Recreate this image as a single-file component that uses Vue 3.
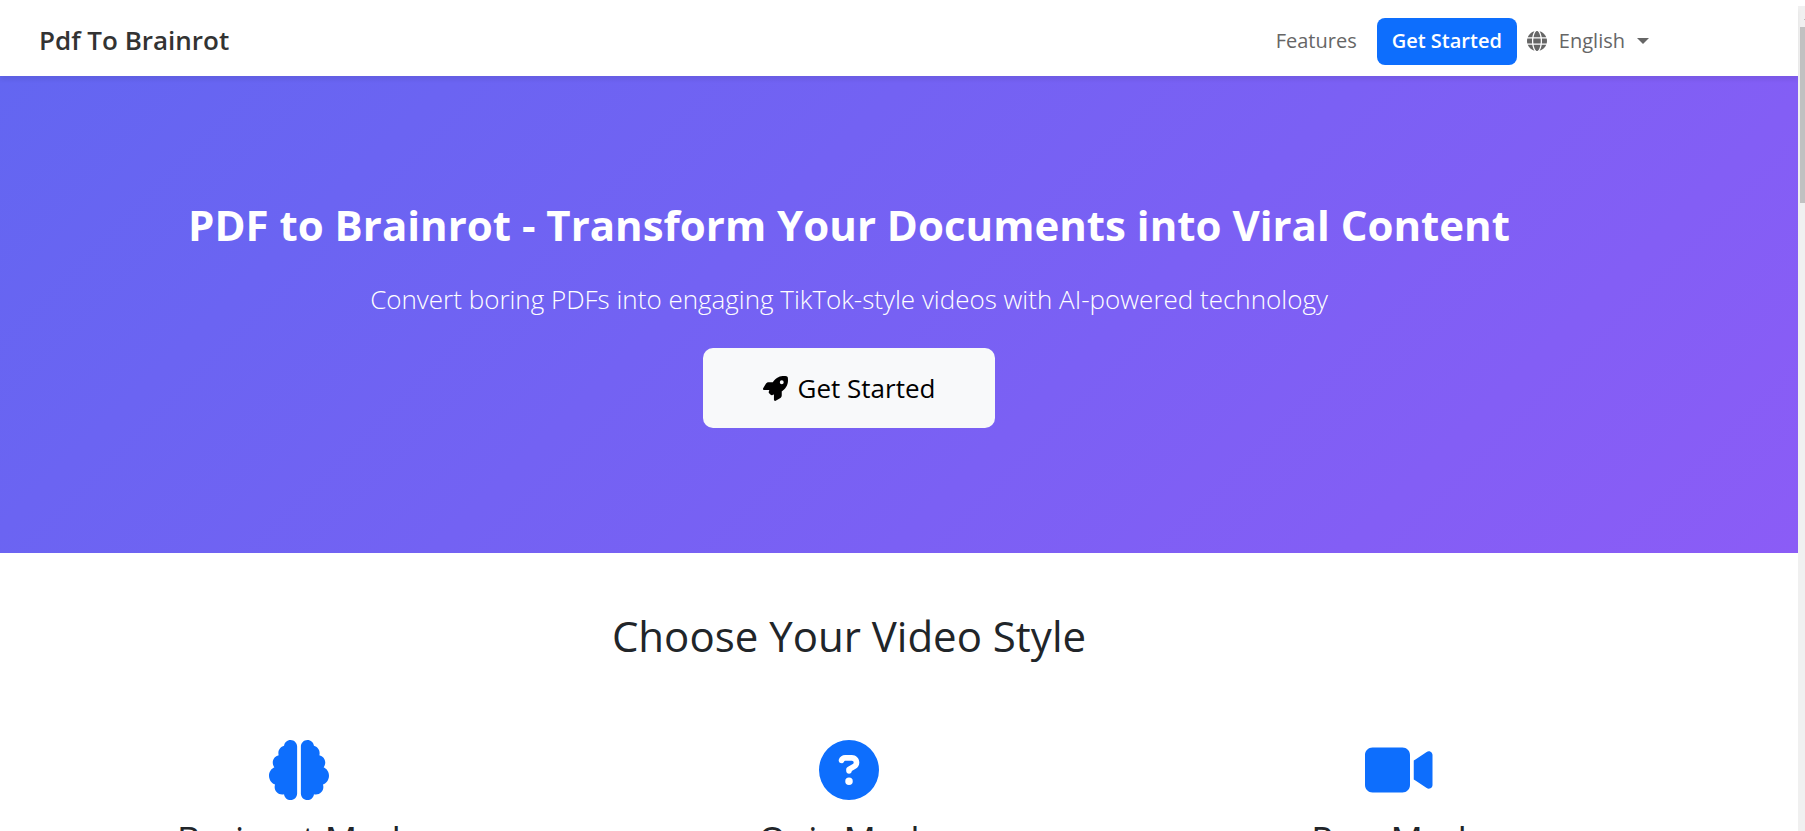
<template>
	<div class="page">
		<div class="page__content">
			<header class="navbar">
				<nav class="navbar__inner container">
					<a class="navbar__brand" href="#">Pdf To Brainrot</a>
					<div class="navbar__menu">
						<a class="navbar__link" href="#features">Features</a>
						<a class="navbar__start" href="#start">Get Started</a>
						<button class="navbar__lang" type="button" aria-haspopup="true">
							<svg width="20" height="20" viewBox="0 0 512 512" fill="currentColor">
								<path
									d="M352 256c0 22.2-1.2 43.6-3.3 64H163.3c-2.2-20.4-3.3-41.8-3.3-64s1.2-43.6 3.3-64H348.7c2.2 20.4 3.3 41.8 3.3 64zm28.8-64H503.9c5.3 20.5 8.1 41.9 8.1 64s-2.8 43.5-8.1 64H380.8c2.1-20.6 3.2-42 3.2-64s-1.1-43.4-3.2-64zm112.6-32H376.7c-10-63.9-29.8-117.4-55.3-151.6c78.3 20.7 142 77.5 171.9 151.6zm-149.1 0H167.7c6.1-36.4 15.5-68.6 27-94.7c10.5-23.6 22.2-40.7 33.5-51.5C239.4 3.2 248.7 0 256 0s16.6 3.2 27.8 13.8c11.3 10.8 23 27.9 33.5 51.5c11.6 26 20.9 58.2 27 94.7zm-209 0H18.6C48.6 85.9 112.2 29.1 190.6 8.4C165.1 42.6 145.3 96.1 135.3 160zM8.1 192H131.2c-2.1 20.6-3.2 42-3.2 64s1.1 43.4 3.2 64H8.1C2.8 299.5 0 278.1 0 256s2.8-43.5 8.1-64zM194.7 446.6c-11.6-26-20.9-58.2-27-94.6H344.3c-6.1 36.4-15.5 68.6-27 94.6c-10.5 23.6-22.2 40.7-33.5 51.5C272.6 508.8 263.3 512 256 512s-16.6-3.2-27.8-13.8c-11.3-10.8-23-27.9-33.5-51.5zM135.3 352c10 63.9 29.8 117.4 55.3 151.6C112.2 482.9 48.6 426.1 18.6 352H135.3zm358.1 0c-30 74.1-93.6 130.9-171.9 151.6c25.5-34.2 45.2-87.7 55.3-151.6H493.4z" />
							</svg>
							<span>English</span>
							<i class="navbar__caret"></i>
						</button>
					</div>
				</nav>
			</header>

			<section class="hero">
				<div class="hero__inner container">
					<h1 class="hero__title">PDF to Brainrot - Transform Your Documents into Viral Content</h1>
					<p class="hero__lead">
						Convert boring PDFs into engaging TikTok-style videos with AI-powered technology
					</p>
					<button class="hero__button" type="button">
						<svg width="25" height="25" viewBox="0 0 512 512" fill="currentColor">
							<path
								d="M156.6 384.9L125.7 354c-8.5-8.5-11.5-20.8-7.7-32.2c3-8.9 7-20.5 11.8-33.8L24 288c-8.6 0-16.6-4.6-20.9-12.1s-4.2-16.7 .2-24.1l52.5-88.5c13-21.9 36.5-35.3 61.9-35.3l82.3 0c2.4-4 4.8-7.7 7.2-11.3C289.1-4.1 411.1-8.1 483.9 5.3c11.6 2.1 20.6 11.2 22.8 22.8c13.4 72.9 9.3 194.8-111.4 276.7c-3.5 2.4-7.3 4.8-11.3 7.2v82.3c0 25.4-13.4 49-35.3 61.9l-88.5 52.5c-7.4 4.4-16.6 4.5-24.1 .2s-12.1-12.2-12.1-20.9V380.8c-14.1 4.9-26.4 8.9-35.7 11.9c-11.2 3.6-23.4 .5-31.8-7.8zM384 168a40 40 0 1 0 0-80 40 40 0 1 0 0 80z" />
						</svg>
						Get Started
					</button>
				</div>
			</section>

			<section id="features" class="styles container">
				<h2 class="styles__title">Choose Your Video Style</h2>
				<div class="styles__grid">
					<article v-for="mode in modes" :key="mode.title" class="styles__item">
						<svg class="styles__icon" :viewBox="mode.viewBox" fill="currentColor">
							<path :d="mode.path" />
						</svg>
						<h3 class="styles__name">{{ mode.title }}</h3>
					</article>
				</div>
			</section>
		</div>

		<div class="scrollbar" aria-hidden="true">
			<div class="scrollbar__arrow"></div>
			<div class="scrollbar__thumb"></div>
		</div>
	</div>
</template>

<script setup>
const modes = [
	{
		title: "Brainrot Mode",
		viewBox: "0 0 512 512",
		path: "M184 0c30.9 0 56 25.1 56 56V456c0 30.9-25.1 56-56 56c-28.9 0-52.7-21.9-55.7-50.1c-5.2 1.4-10.7 2.1-16.3 2.1c-35.3 0-64-28.7-64-64c0-7.4 1.3-14.6 3.6-21.2C21.4 367.4 0 338.2 0 304c0-31.9 18.7-59.5 45.8-72.3C37.1 220.8 32 207 32 192c0-30.7 21.6-56.3 50.4-62.6C80.8 123.9 80 118 80 112c0-29.9 20.6-55.1 48.3-62.1C131.3 21.9 155.1 0 184 0zM328 0c28.9 0 52.6 21.9 55.7 49.9c27.8 7 48.3 32.1 48.3 62.1c0 6-.8 11.9-2.4 17.4c28.8 6.2 50.4 31.9 50.4 62.6c0 15-5.1 28.8-13.8 39.7C493.3 244.5 512 272.1 512 304c0 34.2-21.4 63.4-51.6 74.8c2.3 6.6 3.6 13.8 3.6 21.2c0 35.3-28.7 64-64 64c-5.6 0-11.1-.7-16.3-2.1c-3 28.2-26.8 50.1-55.7 50.1c-30.9 0-56-25.1-56-56V56c0-30.9 25.1-56 56-56z",
	},
	{
		title: "Quiz Mode",
		viewBox: "0 0 512 512",
		path: "M256 512A256 256 0 1 0 256 0a256 256 0 1 0 0 512zM169.8 165.3c7.9-22.3 29.1-37.3 52.8-37.3h58.3c34.9 0 63.1 28.3 63.1 63.1c0 22.6-12.1 43.5-31.7 54.8L280 264.4c-.2 13-10.9 23.6-24 23.6c-13.3 0-24-10.7-24-24V250.5c0-8.6 4.6-16.5 12.1-20.8l44.3-25.4c4.7-2.7 7.6-7.7 7.6-13.1c0-8.4-6.8-15.1-15.1-15.1H222.6c-3.4 0-6.4 2.1-7.5 5.3l-.4 1.2c-4.4 12.5-18.2 19-30.6 14.6s-19-18.2-14.6-30.6l.4-1.2zM224 352a32 32 0 1 1 64 0 32 32 0 1 1 -64 0z",
	},
	{
		title: "Raw Mode",
		viewBox: "0 0 576 512",
		path: "M0 128C0 92.7 28.7 64 64 64H320c35.3 0 64 28.7 64 64V384c0 35.3-28.7 64-64 64H64c-35.3 0-64-28.7-64-64V128zM559.1 99.8c10.4 5.6 16.9 16.4 16.9 28.2V384c0 11.8-6.5 22.6-16.9 28.2s-23 5-32.9-1.6l-96-64L416 337.1V320 192 174.9l14.2-9.5 96-64c9.8-6.5 22.4-7.2 32.9-1.6z",
	},
];
</script>

<style>
body {
	margin: 0;
	background: #fff;
}
</style>

<style scoped>
.page {
	display: flex;
	height: 100vh;
	overflow: hidden;
	color: #212529;
	font-family: "Open Sans", "Noto Sans", sans-serif;
	font-size: 20px;
	line-height: 30px;
}

.page__content {
	flex: 1;
	min-width: 0;
	padding-top: 6px;
}

.container {
	margin-left: 24px;
	margin-right: 124px;
}

.navbar {
	position: relative;
	background: #fff;
	box-shadow: 0 4px 4px rgba(0, 0, 0, 0.06);
}

.navbar__inner {
	display: flex;
	align-items: center;
	justify-content: space-between;
	height: 70px;
	padding: 0 15px;
}

.navbar a {
	text-decoration: none;
}

.navbar__brand {
	padding-bottom: 2px;
	color: #333;
	font-size: 26px;
	font-weight: 600;
}

.navbar__menu {
	display: flex;
	align-items: center;
	gap: 10px;
}

.navbar__link,
.navbar__lang {
	color: #666;
	padding: 0 10px;
}

.navbar__start {
	padding: 8px 15px 9px;
	border-radius: 8px;
	background: #0d6efd;
	color: #fff;
	font-weight: 600;
}

.navbar__lang {
	display: flex;
	align-items: center;
	gap: 12px;
	padding-left: 0;
	border: 0;
	background: none;
	font: inherit;
}

.navbar__caret {
	border-top: 6px solid;
	border-left: 6px solid transparent;
	border-right: 6px solid transparent;
}

.hero {
	padding: 119px 0 125px;
	background: linear-gradient(135deg, #6366f1 0%, #8b5cf6 100%);
	color: #fff;
}

.hero__inner {
	display: flex;
	flex-direction: column;
	align-items: center;
	text-align: center;
}

.hero__title {
	margin: 0 0 24px;
	font-size: 42px;
	font-weight: 700;
	line-height: 60px;
}

.hero__lead {
	margin: 0 0 29px;
	font-size: 26px;
	font-weight: 300;
	line-height: 40px;
}

.hero__button {
	display: flex;
	align-items: center;
	gap: 10px;
	padding: 20px 60px;
	border: 0;
	border-radius: 10px;
	background: #f8f9fa;
	color: #000;
	font-family: inherit;
	font-size: 26px;
	line-height: 40px;
}

.styles {
	padding-top: 59px;
	text-align: center;
}

.styles__title {
	margin: 0 0 80px;
	font-size: 42px;
	font-weight: 400;
	line-height: 48px;
}

.styles__grid {
	display: grid;
	grid-template-columns: repeat(3, 1fr);
}

.styles__item {
	display: flex;
	flex-direction: column;
	align-items: center;
}

.styles__icon {
	height: 60px;
	color: #0d6efd;
}

.styles__name {
	margin: 20px 0 0;
	font-size: 36px;
	font-weight: 500;
	line-height: 40px;
}

.scrollbar {
	flex: none;
	box-sizing: border-box;
	width: 7px;
	margin-top: 6px;
	padding: 10px 0 0 2px;
	overflow: hidden;
	background: #f0f0f0;
}

.scrollbar__arrow {
	width: 0;
	margin: 0 0 7px 4px;
	border: 4px solid transparent;
	border-top: 0;
	border-bottom-color: #888;
}

.scrollbar__thumb {
	height: 176px;
	background: #c1c1c1;
}
</style>
